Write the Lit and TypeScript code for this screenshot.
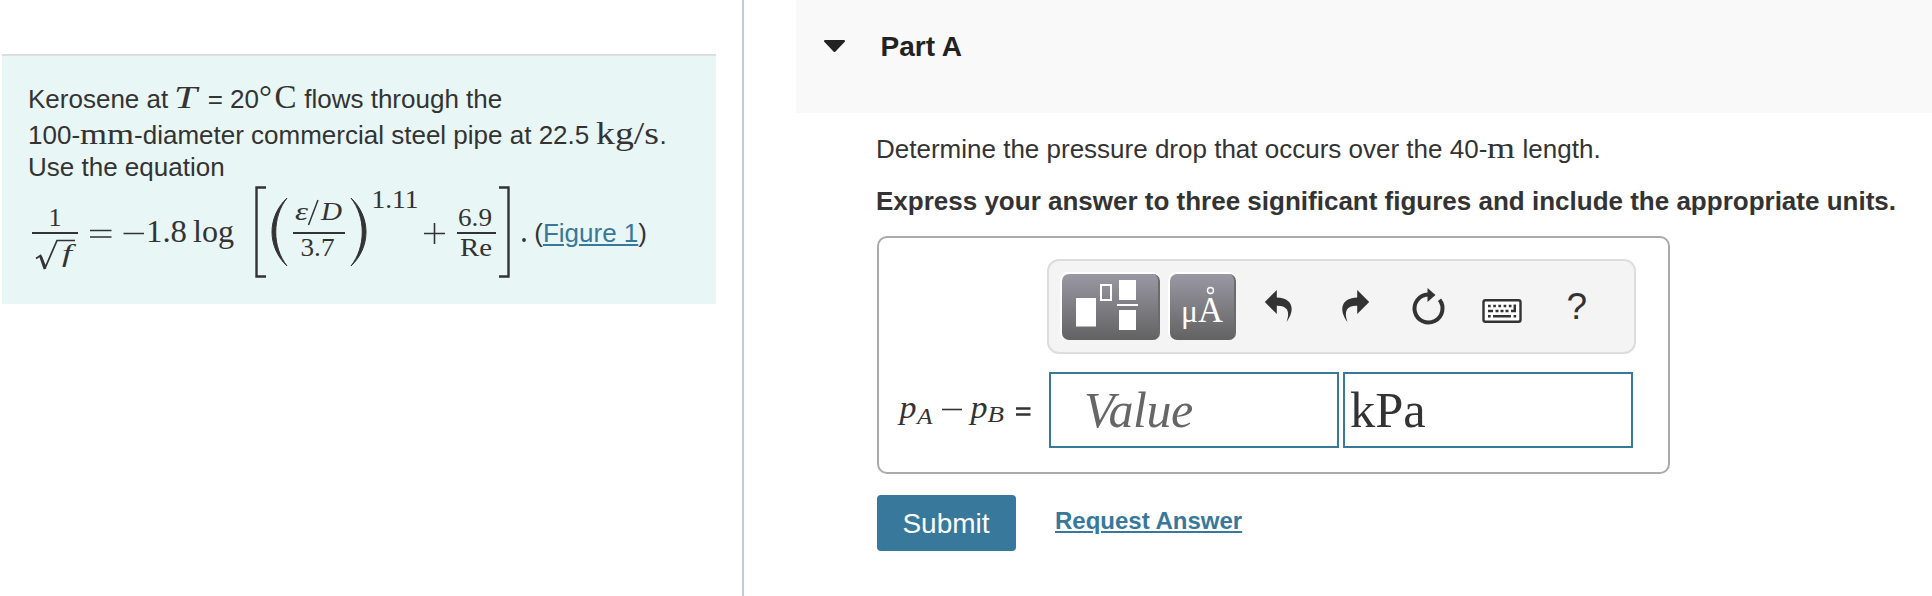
import { LitElement, html, svg, css } from "lit";
import { customElement } from "lit/decorators.js";

const HEIGHT = 20;

/** Inline run of math text that sits on the surrounding baseline. */
const math = (text: string, width: number, size: number, italic = false, pad = 0, x = pad) => html`<svg
    class="math" width=${width + pad * 2} height=${HEIGHT}><text x=${x} y=${HEIGHT} font-size=${size}
    font-style=${italic ? "italic" : "normal"} textLength=${width} lengthAdjust="spacingAndGlyphs">${text}</text></svg>`;

/** One run of text inside the displayed formula. */
const t = (text: string, x: number, y: number, width: number, size: number, italic = false) =>
  svg`<text x=${x} y=${y} font-size=${size} font-style=${italic ? "italic" : "normal"}
    textLength=${width} lengthAdjust="spacingAndGlyphs">${text}</text>`;

@customElement("problem-statement")
export class ProblemStatement extends LitElement {
  static styles = css`
    :host { display: block; box-sizing: border-box; height: 250px; width: 714px; margin: 54px 0 0 2px;
      padding: 25px 0 0 26px; border-top: 2px solid #ddd; background: #e8f6f6; color: #333;
      font: 26px/36px "Liberation Sans", sans-serif; }
    .line { height: 36px; white-space: pre; }
    .short { height: 28px; line-height: 28px; }
    .math, .formula { fill: #333; overflow: visible; font-family: "Liberation Serif", serif; }
    .row { display: flex; align-items: flex-start; }
    .formula { flex: none; margin-left: 2px; }
    .tail { padding-top: 34px; line-height: 36px; white-space: pre; margin-left: -1px; }
    a { color: #37789b; text-decoration: underline; text-decoration-thickness: 2px; text-underline-offset: 2px; }
  `;
  render() {
    return html`
      <div class="line">Kerosene at ${math("T", 23, 32.5, true, 1, -1)} = 20${math("°", 13, 33)}${math("C", 22, 33, false, 1.5, 2.5)} flows through the</div>
      <div class="line">100-${math("mm", 54, 30)}-diameter commercial steel pipe at 22.5 ${math("kg/s", 63, 32)}.</div>
      <div class="line short">Use the equation</div>
      <div class="row"><svg class="formula" width="498" height="104" viewBox="30 181 498 104">
        ${t("1", 48.5, 226, 13, 25)}
        <rect x="32" y="232" width="46" height="2"/>
        <path d="M36 258.5L40.5 255.5L45.5 267L57 240.5H75" fill="none" stroke="#333" stroke-width="1.7"/>
        <path d="M40.5 256L45 269" fill="none" stroke="#333" stroke-width="2.8"/>
        ${t("f", 62, 262, 10, 25, true)}
        <path d="M90 230.5H111.5M90 237H111.5M123.5 233.5H144" fill="none" stroke="#333" stroke-width="1.6"/>
        ${t("1.8", 146, 242, 41, 32)}
        ${t("log", 193, 242, 41, 32)}
        <path d="M266 187.5H256.5V276.5H266" fill="none" stroke="#333" stroke-width="2.4"/>
        <path d="M287 198C267 217 267 247 287 266C272 247 272 217 287 198Z" stroke="#333" stroke-width="1"/>
        ${t("ε", 295, 220, 13, 26, true)}
        <path d="M308.5 225L318 200" fill="none" stroke="#333" stroke-width="1.5"/>
        ${t("D", 321, 220, 21, 26, true)}
        <rect x="293" y="232" width="52" height="2"/>
        ${t("3.7", 300.5, 256, 34, 25)}
        <path d="M351 198C371 217 371 247 351 266C366 247 366 217 351 198Z" stroke="#333" stroke-width="1"/>
        ${t("1.11", 371.5, 208, 47, 25)}
        <path d="M424 233.5H445M434.5 223V244" fill="none" stroke="#333" stroke-width="1.6"/>
        ${t("6.9", 458, 226, 34, 25)}
        <rect x="457" y="232" width="39" height="2"/>
        ${t("Re", 460, 256, 32, 25)}
        <path d="M499 187.5H508.5V276.5H499" fill="none" stroke="#333" stroke-width="2.4"/>
        <circle cx="524" cy="240" r="1.9"/>
      </svg><span class="tail"> (<a>Figure 1</a>)</span></div>`;
  }
}

@customElement("answer-box")
export class AnswerBox extends LitElement {
  static styles = css`
    :host { display: flex; flex-direction: column; box-sizing: border-box; width: 793px; height: 238px;
      border: 2px solid #aaa; border-radius: 10px; padding: 21px 0 0 18px; color: #333; }
    .bar { display: flex; box-sizing: border-box; width: 589px; height: 95px; margin-left: 150px;
      border: 2px solid #ddd; border-radius: 12px; background: #f4f4f4; padding: 13px 0 0 13px; }
    .btn { height: 66px; border-radius: 7px; background: linear-gradient(#9a98a3, #626262);
      box-shadow: -1px -1px 0 1px #fff; box-sizing: border-box; border-right: 2px solid #6b6b6b; flex: none; }
    .tpl { width: 98px; margin-right: 10px; }
    .units { width: 66px; }
    .units text { font-family: "Liberation Serif", serif; fill: #fff; }
    .icons { flex: none; fill: #333; }
    .q { font: 37px "Liberation Sans", sans-serif; }
    .entry { display: flex; margin-top: 18px; }
    .label { flex: none; fill: #333; font-family: "Liberation Serif", serif; }
    .field { box-sizing: border-box; width: 290px; height: 76px; border: 2px solid #37789b; background: #fff;
      margin-right: 4px; line-height: 72px; font-family: "Liberation Serif", serif; }
    .value { font-size: 50px; font-style: italic; color: #666; padding-left: 33px; letter-spacing: -.5px; }
    .unit { font-size: 50.5px; padding-left: 5px; }
  `;
  render() {
    return html`
      <div class="bar">
        <div class="btn tpl"><svg width="96" height="66" fill="#fff"><path
          d="M14 24H34V52.5H14ZM57 6H74V26H57ZM57 36H74V56H57ZM55 30H76V32H55Z"/><rect
          x="39" y="11" width="10" height="15" fill="none" stroke="#fff" stroke-width="2"/></svg></div>
        <div class="btn units"><svg width="64" height="66"><text x="11" y="47.5" font-size="32" textLength="17"
          lengthAdjust="spacingAndGlyphs">μ</text><text x="28" y="47.5" font-size="35"
          textLength="25" lengthAdjust="spacingAndGlyphs">A</text><circle
          cx="40.5" cy="16.5" r="3" fill="none" stroke="#fff" stroke-width="1.4"/></svg></div>
        <svg class="icons" width="384" height="66" viewBox="1236 274 384 66">
          <path d="M1264.8 302L1276.8 290V297.5C1293 298 1295.5 310 1286.5 322C1290.5 311 1287 305.5 1276.8 305.8V314Z"/>
          <path d="M1369.2 302L1357.2 290V297.5C1341 298 1338.5 310 1347.5 322C1343.5 311 1347 305.5 1357.2 305.8V314Z"/>
          <path d="M1428 294.5A14 14 0 1 0 1439.5 299.8" fill="none" stroke="#333" stroke-width="4"/>
          <path d="M1427.5 288L1435.5 295L1427.5 302Z"/>
          <rect x="1483.5" y="300.3" width="37" height="21.5" rx="2" fill="#fff" stroke="#333" stroke-width="2.4"/>
          <path d="M1488 306H1512" fill="none" stroke="#333" stroke-width="2.5" stroke-dasharray="2.7 2.5"/>
          <path d="M1488 311H1493M1495.5 311H1498.5M1500.5 311H1503.5M1505.5 311H1508.5M1511 311H1516M1514.8 304.5V312M1488 316.2H1490.7M1493 316.2H1511M1513.5 316.2H1516.2" fill="none" stroke="#333" stroke-width="2.5"/>
          <text class="q" x="1566.5" y="319">?</text>
        </svg>
      </div>
      <div class="entry">
        <svg class="label" width="152" height="76" viewBox="897 372 152 76">
          <text x="899.5" y="418" font-size="32" font-style="italic" textLength="17" lengthAdjust="spacingAndGlyphs">p</text>
          <text x="917" y="423.5" font-size="24" font-style="italic" textLength="15.5" lengthAdjust="spacingAndGlyphs">A</text>
          <path d="M942 409.5H962" stroke="#333" stroke-width="1.6"/>
          <text x="970.5" y="418" font-size="32" font-style="italic" textLength="17" lengthAdjust="spacingAndGlyphs">p</text>
          <text x="987.5" y="422" font-size="24" font-style="italic" textLength="16.5" lengthAdjust="spacingAndGlyphs">B</text>
          <path d="M1016 408.5H1030.5M1016 414.5H1030.5" stroke="#333" stroke-width="2.3"/>
        </svg>
        <div class="field value">Value</div>
        <div class="field unit">kPa</div>
      </div>`;
  }
}

@customElement("app-root")
export class AppRoot extends LitElement {
  static styles = css`
    :host { display: flex; width: 1932px; height: 596px; overflow: hidden; background: #fff; color: #333;
      font: 26px/36px "Liberation Sans", sans-serif; }
    .left { width: 742px; flex: none; border-right: 2px solid #becbdf; }
    .right { flex: 1; margin-left: 52px; }
    .head { display: flex; box-sizing: border-box; height: 113px; background: #f9f9f9; padding: 28px 0 0 28px; }
    .head h2 { margin: 0 0 0 35.5px; font-size: 28px; line-height: 37px; color: #222; }
    .caret { margin-top: 12px; }
    .body { padding-left: 81px; }
    p { margin: 0; height: 36px; white-space: pre; }
    .first { margin: 18px 0 16px -1px; }
    .strong { font-weight: bold; margin: 0 0 17px -1px; }
    .math { fill: #333; overflow: visible; font-family: "Liberation Serif", serif; }
    .actions { display: flex; margin-top: 21px; }
    .submit { box-sizing: border-box; width: 139px; height: 56px; border-radius: 4px; background: #37789b; color: #fff;
      text-align: center; padding-right: 1px; font-size: 28px; line-height: 57px; }
    .request { margin: 8px 0 0 39px; color: #37789b; font-weight: bold; font-size: 24px; line-height: 36px;
      text-decoration: underline; text-decoration-thickness: 2px; text-underline-offset: 2px; }
  `;
  render() {
    return html`
      <div class="left"><problem-statement></problem-statement></div>
      <div class="right">
        <div class="head"><svg class="caret" width="21" height="12"><path
          d="M1.5 0H19.5Q22 0 20.5 2L11.5 11.5Q10.5 12.5 9.5 11.5L.5 2Q-1 0 1.5 0Z" fill="#222"/></svg>
          <h2>Part A</h2></div>
        <div class="body"><p class="first">Determine the pressure drop that occurs over the 40-${math("m", 28, 30)} length.</p>
          <p class="strong">Express your answer to three significant figures and include the appropriate units.</p>
          <answer-box></answer-box>
          <div class="actions"><div class="submit">Submit</div><a class="request">Request Answer</a></div></div>
      </div>`;
  }
}
